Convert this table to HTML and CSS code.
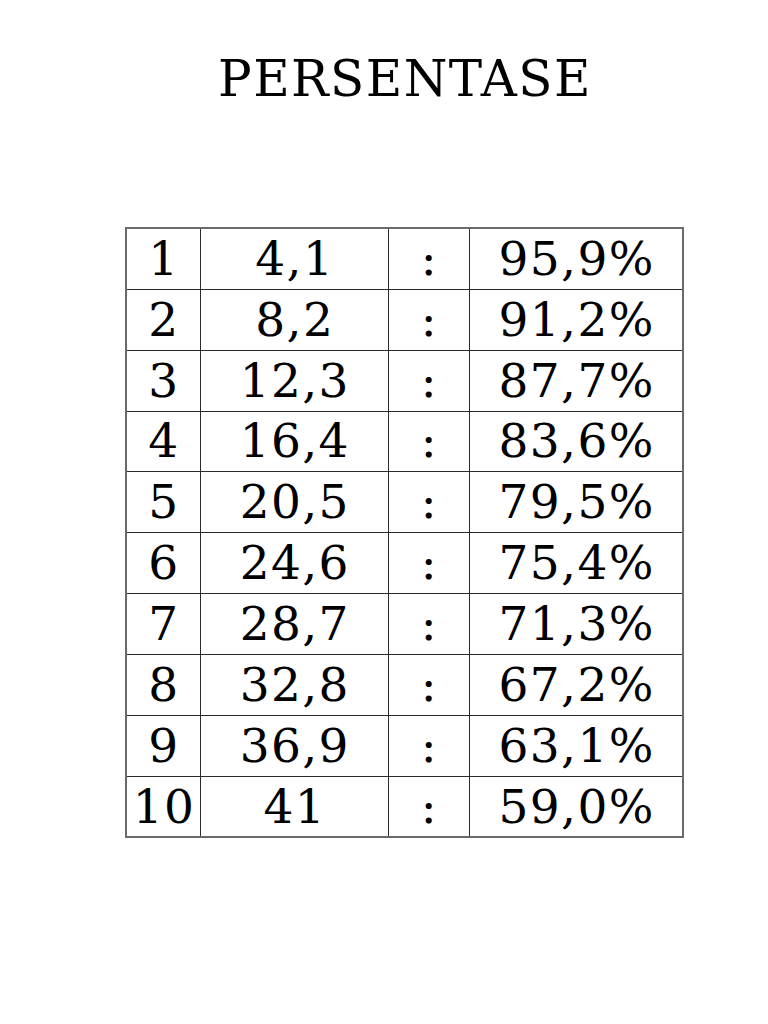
FILE: index.html
```html
<!DOCTYPE html>
<html>
<head>
<meta charset="utf-8">
<link rel="stylesheet" href="styles.css">
</head>
<body>
<div class="sheet">
<h1 class="title">PERSENTASE</h1>
<table class="grid">
<tr><td class="c1">1</td><td class="c2">4,1</td><td class="c3">:</td><td class="c4">95,9%</td></tr>
<tr><td class="c1">2</td><td class="c2">8,2</td><td class="c3">:</td><td class="c4">91,2%</td></tr>
<tr><td class="c1">3</td><td class="c2">12,3</td><td class="c3">:</td><td class="c4">87,7%</td></tr>
<tr><td class="c1">4</td><td class="c2">16,4</td><td class="c3">:</td><td class="c4">83,6%</td></tr>
<tr><td class="c1">5</td><td class="c2">20,5</td><td class="c3">:</td><td class="c4">79,5%</td></tr>
<tr><td class="c1">6</td><td class="c2">24,6</td><td class="c3">:</td><td class="c4">75,4%</td></tr>
<tr><td class="c1">7</td><td class="c2">28,7</td><td class="c3">:</td><td class="c4">71,3%</td></tr>
<tr><td class="c1">8</td><td class="c2">32,8</td><td class="c3">:</td><td class="c4">67,2%</td></tr>
<tr><td class="c1">9</td><td class="c2">36,9</td><td class="c3">:</td><td class="c4">63,1%</td></tr>
<tr><td class="c1">10</td><td class="c2">41</td><td class="c3">:</td><td class="c4">59,0%</td></tr>
</table>
</div>
</body>
</html>
```

FILE: styles.css
```css
html, body {
  margin: 0;
  padding: 0;
  background: #fff;
}
body {
  font-family: "DejaVu Serif", serif;
  color: #000;
  width: 768px;
  height: 1024px;
  overflow: hidden;
}
.sheet {
  width: 559px;
  margin-left: 125px;
}
.title {
  margin: 49px 0 0 0;
  padding-left: 1px;
  font-size: 50px;
  font-weight: normal;
  line-height: 60px;
  letter-spacing: 1.4px;
  text-align: center;
}
.grid {
  margin-top: 118px;
  border-collapse: collapse;
  border: 2px solid #6a6a6a;
}
.grid td {
  border: 1px solid #2a2a2a;
  height: 59.85px;
  padding: 0 0 0 1px;
  font-size: 47px;
  line-height: 58px;
  letter-spacing: 1.4px;
  text-align: center;
  vertical-align: middle;
}
.grid td.c1 { width: 72px; }
.grid td.c2 { width: 186px; }
.grid td.c3 { width: 80px; }
.grid td.c4 { width: 211px; }
```
